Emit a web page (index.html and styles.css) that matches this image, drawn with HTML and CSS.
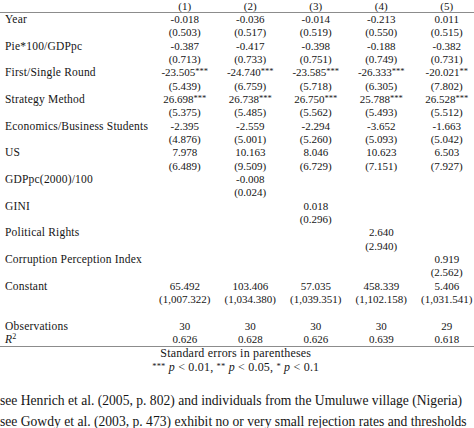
FILE: index.html
```html
<!DOCTYPE html>
<html>
<head>
<meta charset="utf-8">
<link rel="stylesheet" href="styles.css">
</head>
<body>
<div class="page">
<table class="reg">
<colgroup>
<col class="c-label"><col class="c-num"><col class="c-num"><col class="c-num"><col class="c-num"><col class="c-num">
</colgroup>
<thead>
<tr class="head"><th></th><th>(1)</th><th>(2)</th><th>(3)</th><th>(4)</th><th>(5)</th></tr>
</thead>
<tbody>
<tr><td class="lab">Year</td><td>-0.018</td><td>-0.036</td><td>-0.014</td><td>-0.213</td><td>0.011</td></tr>
<tr><td class="lab"></td><td>(0.503)</td><td>(0.517)</td><td>(0.519)</td><td>(0.550)</td><td>(0.515)</td></tr>
<tr><td class="lab">Pie*100/GDPpc</td><td>-0.387</td><td>-0.417</td><td>-0.398</td><td>-0.188</td><td>-0.382</td></tr>
<tr><td class="lab"></td><td>(0.713)</td><td>(0.733)</td><td>(0.751)</td><td>(0.749)</td><td>(0.731)</td></tr>
<tr><td class="lab">First/Single Round</td><td>-23.505<span class="st">***</span></td><td>-24.740<span class="st">***</span></td><td>-23.585<span class="st">***</span></td><td>-26.333<span class="st">***</span></td><td>-20.021<span class="st">**</span></td></tr>
<tr><td class="lab"></td><td>(5.439)</td><td>(6.759)</td><td>(5.718)</td><td>(6.305)</td><td>(7.802)</td></tr>
<tr><td class="lab">Strategy Method</td><td>26.698<span class="st">***</span></td><td>26.738<span class="st">***</span></td><td>26.750<span class="st">***</span></td><td>25.788<span class="st">***</span></td><td>26.528<span class="st">***</span></td></tr>
<tr><td class="lab"></td><td>(5.375)</td><td>(5.485)</td><td>(5.562)</td><td>(5.493)</td><td>(5.512)</td></tr>
<tr><td class="lab">Economics/Business Students</td><td>-2.395</td><td>-2.559</td><td>-2.294</td><td>-3.652</td><td>-1.663</td></tr>
<tr><td class="lab"></td><td>(4.876)</td><td>(5.001)</td><td>(5.260)</td><td>(5.093)</td><td>(5.042)</td></tr>
<tr><td class="lab">US</td><td>7.978</td><td>10.163</td><td>8.046</td><td>10.623</td><td>6.503</td></tr>
<tr><td class="lab"></td><td>(6.489)</td><td>(9.509)</td><td>(6.729)</td><td>(7.151)</td><td>(7.927)</td></tr>
<tr><td class="lab">GDPpc(2000)/100</td><td></td><td>-0.008</td><td></td><td></td><td></td></tr>
<tr><td class="lab"></td><td></td><td>(0.024)</td><td></td><td></td><td></td></tr>
<tr><td class="lab">GINI</td><td></td><td></td><td>0.018</td><td></td><td></td></tr>
<tr><td class="lab"></td><td></td><td></td><td>(0.296)</td><td></td><td></td></tr>
<tr><td class="lab">Political Rights</td><td></td><td></td><td></td><td>2.640</td><td></td></tr>
<tr><td class="lab"></td><td></td><td></td><td></td><td>(2.940)</td><td></td></tr>
<tr><td class="lab">Corruption Perception Index</td><td></td><td></td><td></td><td></td><td>0.919</td></tr>
<tr><td class="lab"></td><td></td><td></td><td></td><td></td><td>(2.562)</td></tr>
<tr><td class="lab">Constant</td><td>65.492</td><td>103.406</td><td>57.035</td><td>458.339</td><td>5.406</td></tr>
<tr><td class="lab"></td><td>(1,007.322)</td><td>(1,034.380)</td><td>(1,039.351)</td><td>(1,102.158)</td><td>(1,031.541)</td></tr>
<tr><td class="lab"></td><td></td><td></td><td></td><td></td><td></td></tr>
<tr><td class="lab">Observations</td><td>30</td><td>30</td><td>30</td><td>30</td><td>29</td></tr>
<tr class="last"><td class="lab"><i>R</i><span class="sq">2</span></td><td>0.626</td><td>0.628</td><td>0.626</td><td>0.639</td><td>0.618</td></tr>
</tbody>
<tfoot>
<tr><td colspan="6" class="note">Standard errors in parentheses</td></tr>
<tr><td colspan="6" class="note"><span class="st">***</span> <i>p</i> &lt; 0.01, <span class="st">**</span> <i>p</i> &lt; 0.05, <span class="st">*</span> <i>p</i> &lt; 0.1</td></tr>
</tfoot>
</table>
<div class="text">
<p class="line">see Henrich et al. (2005, p. 802) and individuals from the Umuluwe village (Nigeria)</p>
<p class="line">see Gowdy et al. (2003, p. 473) exhibit no or very small rejection rates and thresholds</p>
</div>
</div>
</body>
</html>
```
FILE: styles.css
```css
html, body {
  margin: 0;
  padding: 0;
  overflow: hidden;
  background: #ffffff;
}
.page {
  width: 474px;
  height: 428px;
  overflow: hidden;
  color: #151515;
  font-family: "Liberation Serif", "Times New Roman", serif;
}
.reg {
  border-collapse: collapse;
  table-layout: fixed;
  width: 479.5px;
  font-size: 11px;
}
.c-label { width: 152px; }
.c-num { width: 65.5px; }
.reg th, .reg td {
  padding: 0;
  height: 13.33px;
  line-height: 13.33px;
  white-space: nowrap;
  text-align: center;
  font-weight: normal;
}
.reg td.lab {
  text-align: left;
  padding-left: 5px;
  font-size: 11.5px;
  letter-spacing: 0.2px;
}
.head th {
  height: 11px;
  line-height: 10px;
  padding-bottom: 1px;
  border-bottom: 1px solid #8c8c8c;
}
.last td {
  border-bottom: 1px solid #8c8c8c;
}
.st {
  font-size: 8.5px;
  vertical-align: 2px;
  line-height: 0;
}
.sq {
  font-size: 8px;
  vertical-align: 4px;
  line-height: 0;
}
.reg td.note {
  text-align: center;
  font-size: 12px;
  letter-spacing: 0.2px;
  padding-right: 8px;
}
.text {
  padding-top: 16px;
  font-size: 13.6px;
}
.line {
  margin: 0;
  line-height: 21px;
  white-space: nowrap;
}
```
